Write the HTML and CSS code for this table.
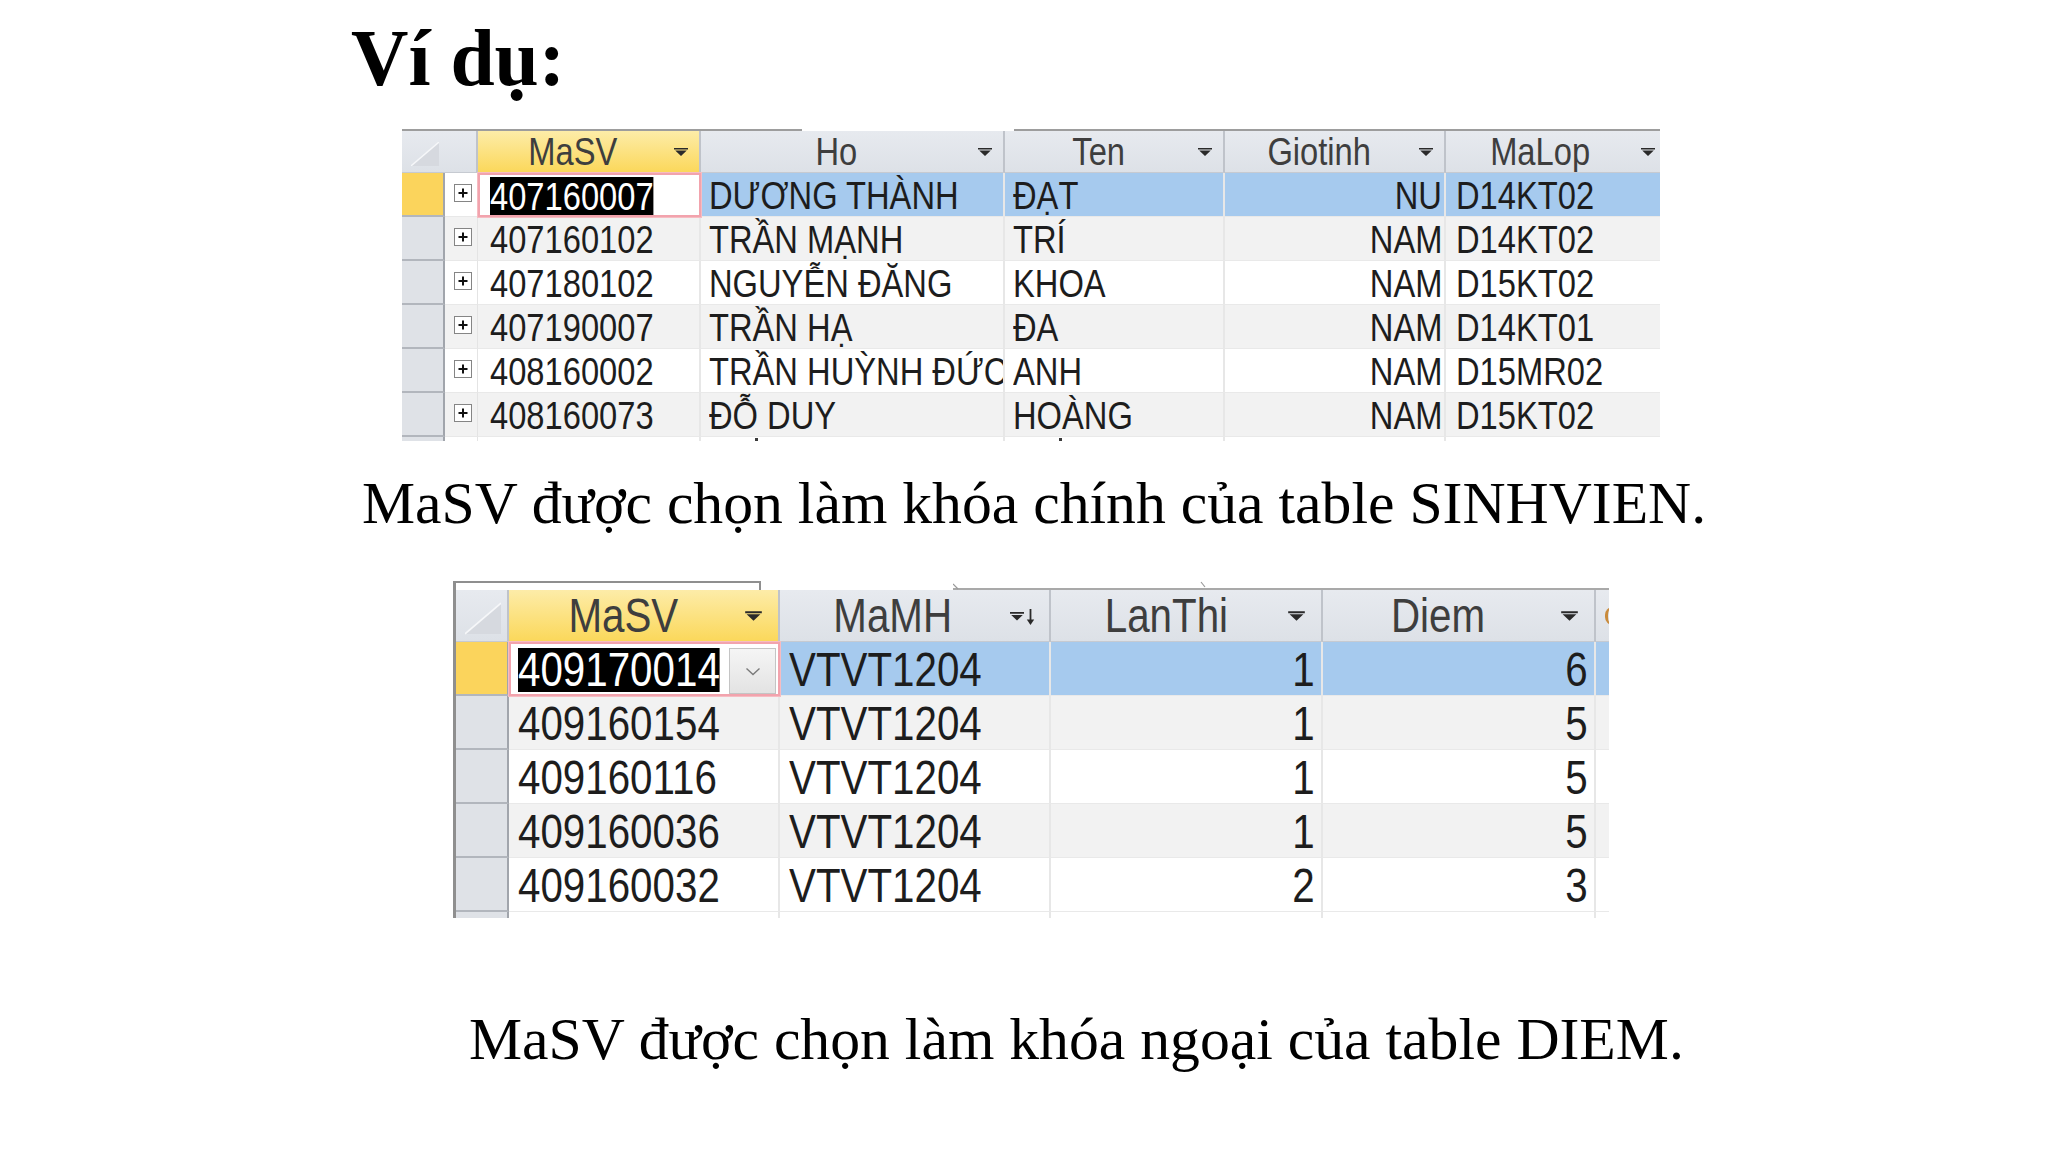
FILE: index.html
```html
<!DOCTYPE html>
<html lang="vi">
<head>
<meta charset="utf-8">
<title>Ví dụ: khóa chính và khóa ngoại</title>
<link rel="stylesheet" href="styles.css">
</head>
<body>
<main class="slide">
  <h1 class="title">Ví dụ:</h1>

  <section class="sheet sheet-sv">
    <div class="rim-top">
      <span class="rim-seg rim-a"></span>
      <span class="rim-gap"></span>
      <span class="rim-seg rim-b"></span>
    </div>
    <div class="grid grid-sv">
      <div class="row head">
        <div class="hd corner"><svg class="corner-tri" viewBox="0 0 28 24"><polygon points="0,24 28,0 28,24"/><line x1="0" y1="24" x2="28" y2="0"/></svg></div>
        <div class="hd hd-active"><span class="lbl"><span class="t">MaSV</span></span><svg class="arrow" viewBox="0 0 16 8"><path d="M1 0h14v1.6H1z M2.2 2.6h11.6L8 8z"/></svg></div>
        <div class="hd"><span class="lbl"><span class="t">Ho</span></span><svg class="arrow" viewBox="0 0 16 8"><path d="M1 0h14v1.6H1z M2.2 2.6h11.6L8 8z"/></svg></div>
        <div class="hd"><span class="lbl"><span class="t">Ten</span></span><svg class="arrow" viewBox="0 0 16 8"><path d="M1 0h14v1.6H1z M2.2 2.6h11.6L8 8z"/></svg></div>
        <div class="hd"><span class="lbl"><span class="t">Giotinh</span></span><svg class="arrow" viewBox="0 0 16 8"><path d="M1 0h14v1.6H1z M2.2 2.6h11.6L8 8z"/></svg></div>
        <div class="hd"><span class="lbl"><span class="t">MaLop</span></span><svg class="arrow" viewBox="0 0 16 8"><path d="M1 0h14v1.6H1z M2.2 2.6h11.6L8 8z"/></svg></div>
      </div>

      <div class="row cur">
        <div class="sel"></div>
        <div class="exp"><svg class="plus" viewBox="0 0 18 18"><rect x="0.5" y="0.5" width="17" height="17"/><path d="M4.5 9h9M9 4.5v9"/></svg></div>
        <div class="c k active"><span class="t hl">407160007</span></div>
        <div class="c"><span class="t">DƯƠNG THÀNH</span></div>
        <div class="c"><span class="t">ĐẠT</span></div>
        <div class="c num"><span class="t">NU</span></div>
        <div class="c m"><span class="t">D14KT02</span></div>
      </div>
      <div class="row alt">
        <div class="sel"></div>
        <div class="exp"><svg class="plus" viewBox="0 0 18 18"><rect x="0.5" y="0.5" width="17" height="17"/><path d="M4.5 9h9M9 4.5v9"/></svg></div>
        <div class="c k"><span class="t">407160102</span></div>
        <div class="c"><span class="t">TRẦN MẠNH</span></div>
        <div class="c"><span class="t">TRÍ</span></div>
        <div class="c num"><span class="t">NAM</span></div>
        <div class="c m"><span class="t">D14KT02</span></div>
      </div>
      <div class="row">
        <div class="sel"></div>
        <div class="exp"><svg class="plus" viewBox="0 0 18 18"><rect x="0.5" y="0.5" width="17" height="17"/><path d="M4.5 9h9M9 4.5v9"/></svg></div>
        <div class="c k"><span class="t">407180102</span></div>
        <div class="c"><span class="t">NGUYỄN ĐĂNG</span></div>
        <div class="c"><span class="t">KHOA</span></div>
        <div class="c num"><span class="t">NAM</span></div>
        <div class="c m"><span class="t">D15KT02</span></div>
      </div>
      <div class="row alt">
        <div class="sel"></div>
        <div class="exp"><svg class="plus" viewBox="0 0 18 18"><rect x="0.5" y="0.5" width="17" height="17"/><path d="M4.5 9h9M9 4.5v9"/></svg></div>
        <div class="c k"><span class="t">407190007</span></div>
        <div class="c"><span class="t">TRẦN HẠ</span></div>
        <div class="c"><span class="t">ĐA</span></div>
        <div class="c num"><span class="t">NAM</span></div>
        <div class="c m"><span class="t">D14KT01</span></div>
      </div>
      <div class="row">
        <div class="sel"></div>
        <div class="exp"><svg class="plus" viewBox="0 0 18 18"><rect x="0.5" y="0.5" width="17" height="17"/><path d="M4.5 9h9M9 4.5v9"/></svg></div>
        <div class="c k"><span class="t">408160002</span></div>
        <div class="c"><span class="t">TRẦN HUỲNH ĐỨC</span></div>
        <div class="c"><span class="t">ANH</span></div>
        <div class="c num"><span class="t">NAM</span></div>
        <div class="c m"><span class="t">D15MR02</span></div>
      </div>
      <div class="row alt">
        <div class="sel"></div>
        <div class="exp"><svg class="plus" viewBox="0 0 18 18"><rect x="0.5" y="0.5" width="17" height="17"/><path d="M4.5 9h9M9 4.5v9"/></svg></div>
        <div class="c k"><span class="t">408160073</span></div>
        <div class="c"><span class="t">ĐỖ DUY</span></div>
        <div class="c"><span class="t">HOÀNG</span></div>
        <div class="c num"><span class="t">NAM</span></div>
        <div class="c m"><span class="t">D15KT02</span></div>
      </div>
      <div class="row stub">
        <div class="sel"></div>
        <div class="exp"></div>
        <div class="c"></div>
        <div class="c"><span class="mark"></span></div>
        <div class="c"><span class="mark"></span></div>
        <div class="c"></div>
        <div class="c"></div>
      </div>
    </div>
  </section>

  <p class="caption caption-pk">MaSV được chọn làm khóa chính của table SINHVIEN.</p>

  <section class="sheet sheet-diem">
    <div class="rim-bracket">
      <span class="bracket"></span>
      <span class="bracket-gap"></span>
      <svg class="rim-line" viewBox="0 0 656 9" preserveAspectRatio="none"><line class="ln" x1="0" y1="8" x2="656" y2="8"/><line class="tick" x1="0" y1="3" x2="5" y2="8"/><line class="tick" x1="248" y1="1" x2="252" y2="6"/></svg>
    </div>
    <div class="grid grid-diem">
      <div class="row head">
        <div class="hd corner"><svg class="corner-tri" viewBox="0 0 28 24"><polygon points="0,24 28,0 28,24"/><line x1="0" y1="24" x2="28" y2="0"/></svg></div>
        <div class="hd hd-active"><span class="lbl"><span class="t">MaSV</span></span><svg class="arrow" viewBox="0 0 16 8"><path d="M1 0h14v1.6H1z M2.2 2.6h11.6L8 8z"/></svg></div>
        <div class="hd"><span class="lbl"><span class="t">MaMH</span></span><svg class="sort" viewBox="0 0 26 20"><path d="M0 6h14v1.7H0z M1.2 9h11.6L7 14.5z"/><path class="stem" d="M20.5 3v13"/><path d="M16.8 13.5h7.4L20.5 19z"/></svg></div>
        <div class="hd"><span class="lbl"><span class="t">LanThi</span></span><svg class="arrow" viewBox="0 0 16 8"><path d="M1 0h14v1.6H1z M2.2 2.6h11.6L8 8z"/></svg></div>
        <div class="hd"><span class="lbl"><span class="t">Diem</span></span><svg class="arrow" viewBox="0 0 16 8"><path d="M1 0h14v1.6H1z M2.2 2.6h11.6L8 8z"/></svg></div>
        <div class="hd hd-peek"><span class="peek"></span></div>
      </div>

      <div class="row cur">
        <div class="sel"></div>
        <div class="c k active"><span class="cell-text"><span class="t hl">409170014</span></span><span class="dd"><svg viewBox="0 0 16 9"><path d="M1.5 1.5l6.5 6 6.5-6"/></svg></span></div>
        <div class="c"><span class="t">VTVT1204</span></div>
        <div class="c num"><span class="t">1</span></div>
        <div class="c num"><span class="t">6</span></div>
        <div class="c edge"></div>
      </div>
      <div class="row alt">
        <div class="sel"></div>
        <div class="c k"><span class="t">409160154</span></div>
        <div class="c"><span class="t">VTVT1204</span></div>
        <div class="c num"><span class="t">1</span></div>
        <div class="c num"><span class="t">5</span></div>
        <div class="c edge"></div>
      </div>
      <div class="row">
        <div class="sel"></div>
        <div class="c k"><span class="t">409160116</span></div>
        <div class="c"><span class="t">VTVT1204</span></div>
        <div class="c num"><span class="t">1</span></div>
        <div class="c num"><span class="t">5</span></div>
        <div class="c edge"></div>
      </div>
      <div class="row alt">
        <div class="sel"></div>
        <div class="c k"><span class="t">409160036</span></div>
        <div class="c"><span class="t">VTVT1204</span></div>
        <div class="c num"><span class="t">1</span></div>
        <div class="c num"><span class="t">5</span></div>
        <div class="c edge"></div>
      </div>
      <div class="row">
        <div class="sel"></div>
        <div class="c k"><span class="t">409160032</span></div>
        <div class="c"><span class="t">VTVT1204</span></div>
        <div class="c num"><span class="t">2</span></div>
        <div class="c num"><span class="t">3</span></div>
        <div class="c edge"></div>
      </div>
      <div class="row stub">
        <div class="sel"></div>
        <div class="c"></div>
        <div class="c"></div>
        <div class="c"></div>
        <div class="c"></div>
        <div class="c edge"></div>
      </div>
    </div>
  </section>

  <p class="caption caption-fk">MaSV được chọn làm khóa ngoại của table DIEM.</p>
</main>
</body>
</html>
```

FILE: styles.css
```css
* { box-sizing: border-box; }

html, body {
  margin: 0;
  padding: 0;
  background: #ffffff;
}

.slide {
  width: 2048px;
  height: 1152px;
  overflow: hidden;
  background: #ffffff;
  color: #000000;
  font-family: "Liberation Serif", "Times New Roman", serif;
}

/* ---------- slide text ---------- */
.title {
  margin: 0;
  padding: 13px 0 0 351px;
  font-size: 79.5px;
  line-height: 91px;
  font-weight: 700;
}

.caption {
  margin: 0;
  font-size: 59.7px;
  line-height: 70px;
  font-weight: 400;
  white-space: nowrap;
}
.caption-pk { margin-top: 27px; padding-left: 362px; }
.caption-fk { margin-top: 86px; padding-left: 469px; }

/* ---------- datasheets ---------- */
.sheet {
  font-family: "Liberation Sans", Arial, sans-serif;
  color: #1d1d1d;
}
.sheet-sv {
  margin: 25px 0 0 402px;
  width: 1258px;
  overflow: hidden;
  font-size: 38px;
}
.sheet-diem {
  margin: 43px 0 0 453px;
  width: 1156px;
  font-size: 48px;
}

.t {
  display: inline-block;
  white-space: nowrap;
  transform-origin: 0 50%;
}
.sheet-sv .t { transform: scaleX(0.86); }
.sheet-diem .t { transform: scaleX(0.84); }

/* top edges */
.rim-top { display: flex; height: 2px; }
.rim-seg { background: #9d9d9d; }
.rim-a { width: 400px; }
.rim-gap { width: 212px; }
.rim-b { flex: 1; }

.rim-bracket { display: flex; height: 9px; }
.bracket {
  width: 308px;
  border-top: 2px solid #8f8f8f;
  border-right: 2px solid #8f8f8f;
  border-left: 3px solid #8f8f8f;
}
.bracket-gap { width: 192px; }
.rim-line { flex: 1; height: 9px; }
.rim-line .ln { stroke: #a9a9a9; stroke-width: 2; }
.rim-line .tick { stroke: #9a9a9a; stroke-width: 1.2; }

/* grid */
.grid { display: grid; }
.grid-sv {
  width: 1266px;
  grid-template-columns: 43px 33px 223px 304px 220px 221px 222px;
  grid-template-rows: 42px repeat(6, 44px) 4px;
}
.grid-diem {
  border-left: 3px solid #8f8f8f;
  grid-template-columns: 53px 271px 271px 272px 273px 13px;
  grid-template-rows: 52px repeat(5, 54px) 6px;
}
.row { display: contents; }

/* header */
.hd {
  display: flex;
  align-items: center;
  overflow: hidden;
  background: linear-gradient(#e7eaef, #dde1e7);
  border-right: 2px solid #bfc3ca;
  border-bottom: 1px solid #c6cad1;
  color: #3e3e3e;
}
.sheet-sv .hd { line-height: 42px; }
.sheet-diem .hd { line-height: 52px; }
.hd-active { background: linear-gradient(#fdeca8, #fbd85b); }
.lbl { flex: 1; text-align: center; white-space: nowrap; }
.lbl .t { transform-origin: 50% 50%; }

.arrow { flex: none; fill: #2a2a2a; }
.sheet-sv .arrow { width: 16px; height: 8px; margin: 0 10px 0 5px; }
.sheet-diem .arrow { width: 19px; height: 10px; margin: 0 15px 0 6px; }

.sort { flex: none; width: 26px; height: 20px; margin: 0 13px 0 4px; fill: #2a2a2a; }
.sort .stem { stroke: #2a2a2a; stroke-width: 1.8; fill: none; }

.corner { align-items: stretch; }
.sheet-sv .corner { grid-column: span 2; padding: 11px 0 0 9px; }
.sheet-diem .corner { padding: 11px 0 0 9px; }
.corner-tri { width: 28px; height: 24px; }
.sheet-diem .corner-tri { width: 36px; height: 35px; }
.corner-tri polygon { fill: #d6d9df; }
.corner-tri line { stroke: #f6f7f9; stroke-width: 1.4; }

.hd-peek { border-right: 0; justify-content: flex-end; }
.peek {
  width: 8px;
  height: 18px;
  margin-right: -4px;
  border-left: 3px solid #c98b3c;
  border-radius: 8px 0 0 8px;
}

/* row selector */
.sel {
  background: #dfe2e7;
  border-right: 2px solid #a1a5ac;
  border-bottom: 2px solid #b2b6bd;
}
.row.cur > .sel { background: #fbd45c; }

/* expand column */
.exp {
  padding: 11px 0 0 9px;
  background: #ffffff;
  border-right: 1px solid #e4e4e4;
  border-bottom: 1px solid #e8e8e8;
}
.plus { display: block; width: 18px; height: 18px; }
.plus rect { fill: #ffffff; stroke: #858585; stroke-width: 1; }
.plus path { stroke: #111111; stroke-width: 2; fill: none; }

/* data cells */
.c {
  overflow: hidden;
  white-space: nowrap;
  background: #ffffff;
  border-right: 2px solid #e7e7e7;
  border-bottom: 1px solid #e9e9e9;
}
.sheet-sv .c { padding: 3px 0 0 8px; line-height: 41px; }
.sheet-sv .c.k { padding-left: 12px; }
.sheet-sv .c.m { padding-left: 10px; }
.sheet-sv .c.num { padding: 3px 2px 0 0; }

.sheet-diem .c { padding: 2px 0 0 9px; line-height: 52px; }
.sheet-diem .c.num { padding: 2px 6px 0 0; }

.c.num { text-align: right; }
.c.num .t { transform-origin: 100% 50%; }
.c.edge { border-right: 0; }

.row.alt > .c,
.row.alt > .exp { background: #f2f2f2; }
.row.cur > .c { background: #a6caee; }

.row.cur > .c.active {
  position: relative;
  z-index: 1;
  background: #ffffff;
  border: 2px solid #f2a3ad;
  box-shadow: 0 0 0 1px #f6bcc2;
}
.sheet-sv .c.active { padding: 2px 0 0 10px; line-height: 40px; }
.sheet-diem .c.active {
  display: flex;
  align-items: flex-start;
  padding: 4px 2px 0 7px;
  line-height: 44px;
}

.hl { background: #000000; color: #ffffff; }

.cell-text { flex: 1; min-width: 0; }
.dd {
  flex: none;
  width: 47px;
  height: 46px;
  display: flex;
  align-items: center;
  justify-content: center;
  border: 1px solid #c4c4c4;
  background: linear-gradient(#f5f5f5, #e3e3e3);
}
.dd svg { width: 16px; height: 9px; }
.dd path { fill: none; stroke: #7a7a7a; stroke-width: 1.4; }

.row.stub > * { border-bottom: 0; }
.row.stub > .c { padding: 0; line-height: 0; }
.mark {
  display: block;
  width: 3px;
  height: 3px;
  margin: 1px 0 0 54px;
  background: #3a3a3a;
}
```
